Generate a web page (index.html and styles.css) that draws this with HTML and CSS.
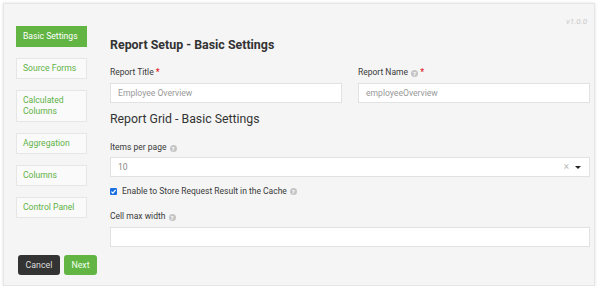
FILE: index.html
```html
<!DOCTYPE html>
<html>
<head>
<meta charset="utf-8">
<link rel="stylesheet" href="styles.css">
</head>
<body>
<div class="panel">
  <div class="version">v1.0.0</div>
  <div class="layout">
    <nav class="sidebar">
      <div class="nav-btn active">Basic Settings</div>
      <div class="nav-btn">Source Forms</div>
      <div class="nav-btn">Calculated<br>Columns</div>
      <div class="nav-btn">Aggregation</div>
      <div class="nav-btn">Columns</div>
      <div class="nav-btn">Control Panel</div>
    </nav>
    <main class="main">
      <h1 class="title">Report Setup - Basic Settings</h1>
      <div class="row">
        <div class="field">
          <label class="label">Report Title <span class="req">*</span></label>
          <div class="input"><span class="placeholder">Employee Overview</span></div>
        </div>
        <div class="field">
          <label class="label">Report Name <span class="help">?</span> <span class="req">*</span></label>
          <div class="input"><span class="placeholder">employeeOverview</span></div>
        </div>
      </div>
      <h2 class="subtitle">Report Grid - Basic Settings</h2>
      <label class="label sec">Items per page <span class="help">?</span></label>
      <div class="input select">
        <span class="value">10</span>
        <span class="controls"><span class="clear">×</span><span class="caret"></span></span>
      </div>
      <div class="check-row">
        <span class="checkbox"><svg viewBox="0 0 8 8" width="8" height="8"><path d="M1.6 4.1 L3.3 5.8 L6.5 2.2" fill="none" stroke="#fff" stroke-width="1.4"/></svg></span>
        <span class="check-label">Enable to Store Request Result in the Cache</span>
        <span class="help">?</span>
      </div>
      <label class="label sec2">Cell max width <span class="help">?</span></label>
      <div class="input"></div>
    </main>
  </div>
  <div class="footer">
    <div class="btn cancel">Cancel</div>
    <div class="btn next">Next</div>
  </div>
</div>
</body>
</html>
```

FILE: styles.css
```css
html, body {
  margin: 0;
  padding: 0;
  background: #fff;
}
body {
  font-family: Roboto, "Liberation Sans", Arial, sans-serif;
  color: #333;
}
.panel {
  position: relative;
  box-sizing: border-box;
  margin: 3px 0 0 3px;
  width: 592px;
  height: 283px;
  background: #f5f5f5;
  border: 1px solid #e6e6e6;
  box-shadow: 0 0 3px rgba(0,0,0,0.12);
  padding: 22px 4px 0 12px;
}
.version {
  position: absolute;
  top: 13px;
  right: 7px;
  font-size: 8px;
  font-style: italic;
  color: #c8c8c8;
}
.layout {
  display: grid;
  grid-template-columns: 71px 480px;
  column-gap: 23px;
}
.sidebar {
  display: flex;
  flex-direction: column;
  gap: 11px;
}
.nav-btn {
  box-sizing: border-box;
  min-height: 21px;
  padding: 4px 2px 4px 6px;
  font-size: 8.6px;
  line-height: 11px;
  white-space: nowrap;
  color: #5fb246;
  background: #fafafa;
  border: 1px solid #e6e6e6;
}
.nav-btn.active {
  background: #62b543;
  border-color: #62b543;
  color: #fff;
}
.main {
  display: flex;
  flex-direction: column;
  padding-top: 11px;
}
.title {
  margin: 0;
  font-size: 12.4px;
  line-height: 16px;
  font-weight: 700;
  color: #333;
}
.row {
  display: grid;
  grid-template-columns: 232px 232px;
  column-gap: 16px;
  margin-top: 13px;
}
.field {
  display: flex;
  flex-direction: column;
}
.label {
  display: block;
  font-size: 8.5px;
  line-height: 12px;
  color: #3a3a3a;
}
.label.sec { margin-top: 14px; }
.label.sec2 { margin-top: 13px; }
.req {
  color: #e0282f;
  font-weight: 700;
}
.help {
  display: inline-block;
  width: 7px;
  height: 7px;
  border-radius: 50%;
  background: #c4c4c4;
  color: #fff;
  font-size: 6px;
  line-height: 7px;
  text-align: center;
  font-weight: 700;
  vertical-align: -1px;
  margin-left: 1px;
}
.input {
  box-sizing: border-box;
  height: 20px;
  margin-top: 5px;
  background: #fff;
  border: 1px solid #e2e2e2;
  padding: 0 7px;
  font-size: 8.6px;
  line-height: 18px;
  display: flex;
  align-items: center;
}
.placeholder {
  color: #999;
}
.subtitle {
  margin: 8px 0 0;
  font-size: 12.3px;
  line-height: 16px;
  font-weight: 400;
  color: #333;
}
.select {
  margin-top: 4px;
  justify-content: space-between;
}
.select .value {
  color: #888;
}
.controls {
  display: flex;
  align-items: center;
  gap: 6px;
}
.clear {
  color: #bbb;
  font-size: 10px;
}
.caret {
  width: 0;
  height: 0;
  border-left: 3px solid transparent;
  border-right: 3px solid transparent;
  border-top: 3px solid #222;
  margin-right: 1px;
}
.check-row {
  display: flex;
  align-items: center;
  margin-top: 8px;
  height: 12px;
  font-size: 8.5px;
  color: #3a3a3a;
}
.checkbox {
  box-sizing: border-box;
  width: 7px;
  height: 7px;
  border-radius: 1px;
  background: #1b6fe0;
  display: flex;
  align-items: center;
  justify-content: center;
  margin-right: 5px;
}
.checkbox svg {
  width: 7px;
  height: 7px;
}
.check-label {
  margin-right: 2px;
}
.footer {
  display: flex;
  gap: 4px;
  position: absolute;
  left: 14px;
  top: 251px;
}
.btn {
  box-sizing: border-box;
  height: 20px;
  border-radius: 3px;
  font-size: 8.8px;
  line-height: 20px;
  text-align: center;
}
.cancel {
  width: 42px;
  background: #333;
  color: #ddd;
}
.next {
  width: 33px;
  background: #62b543;
  color: #f0fff0;
}
```
